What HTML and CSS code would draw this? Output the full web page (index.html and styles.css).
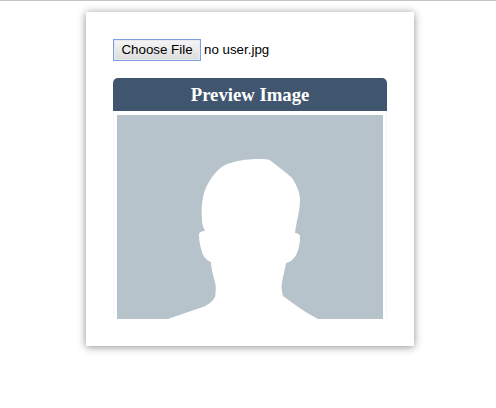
FILE: index.html
```html
<!DOCTYPE html>
<html lang="en">
<head>
    <meta charset="UTF-8">
    <meta name="viewport" content="width=device-width, initial-scale=1.0">
    <title>Preview Image</title>
    <link rel="stylesheet" href="styles.css">
</head>
<body>

<div class="container">
    <div class="file-row">
        <button type="button" class="file-button">Choose File</button>
        <span class="file-name">no user.jpg</span>
    </div>

    <div class="preview">
        <h3 class="preview-title">Preview Image</h3>
        <div class="preview-body">
            <svg class="preview-image" viewBox="0 0 266 204">
                <rect width="266" height="204" fill="#b7c3ca"/>
                <path fill="#fff" d="M51 204 C62 200 74 196 86 192 C91 190 95 187 98 182 C99 176 99 171 98 167 C96 160 94 153 94 147 C89 145 86 141 85 137 C83 131 82 125 82 120 C82 117 85 116 88 116 C86 112 85 109 85 105 C84 95 85 83 88 75 C92 65 100 54 108 50 C117 46 130 44 141 44 C147 44 151 44 154 46 C161 52 169 57 175 63 C179 69 183 77 183 85 C183 96 179 108 178 118 C180 118 183 119 183 122 C183 128 182 133 180 138 C178 143 174 147 169 148 C168 155 166 161 165 167 C164 172 165 177 166 181 C177 189 189 198 201 204 Z"/>
            </svg>
        </div>
    </div>
</div>

</body>
</html>
```

FILE: styles.css
```css
body {
    margin: 0;
    height: 408px;
    border-top: 1px solid #c4c4c4;
    box-sizing: border-box;
    background-color: #fff;
    font-family: "Liberation Sans", Arial, sans-serif;
    overflow: hidden;
}
.container {
    width: 328px;
    height: 334px;
    box-sizing: border-box;
    margin: 11px 0 0 86px;
    padding: 27px;
    background-color: #fff;
    box-shadow: 0 1px 8px rgba(0, 0, 0, 0.45);
}
.file-row {
    display: flex;
    align-items: center;
    gap: 3px;
    height: 21px;
    font-size: 13.33px;
    color: #000;
}
.file-button {
    width: 88px;
    height: 22px;
    padding: 0;
    border: 1px solid #7f9fdc;
    box-shadow: inset 0 0 0 1px #e6e9ee;
    background: linear-gradient(#f6f6f6, #dcdcdc);
    font-family: inherit;
    font-size: 13.33px;
    color: #000;
}
.preview {
    margin-top: 18px;
}
.preview-title {
    margin: 0;
    height: 33px;
    line-height: 34px;
    border-radius: 5px 5px 0 0;
    background-color: #40566f;
    color: #fff;
    font-family: "Liberation Serif", "Times New Roman", serif;
    font-size: 18.72px;
    font-weight: bold;
    text-align: center;
}
.preview-body {
    padding: 4px 3px 0;
    border: solid #f6f6f6;
    border-width: 0 1px;
}
.preview-image {
    display: block;
    width: 266px;
    height: 204px;
}
```
